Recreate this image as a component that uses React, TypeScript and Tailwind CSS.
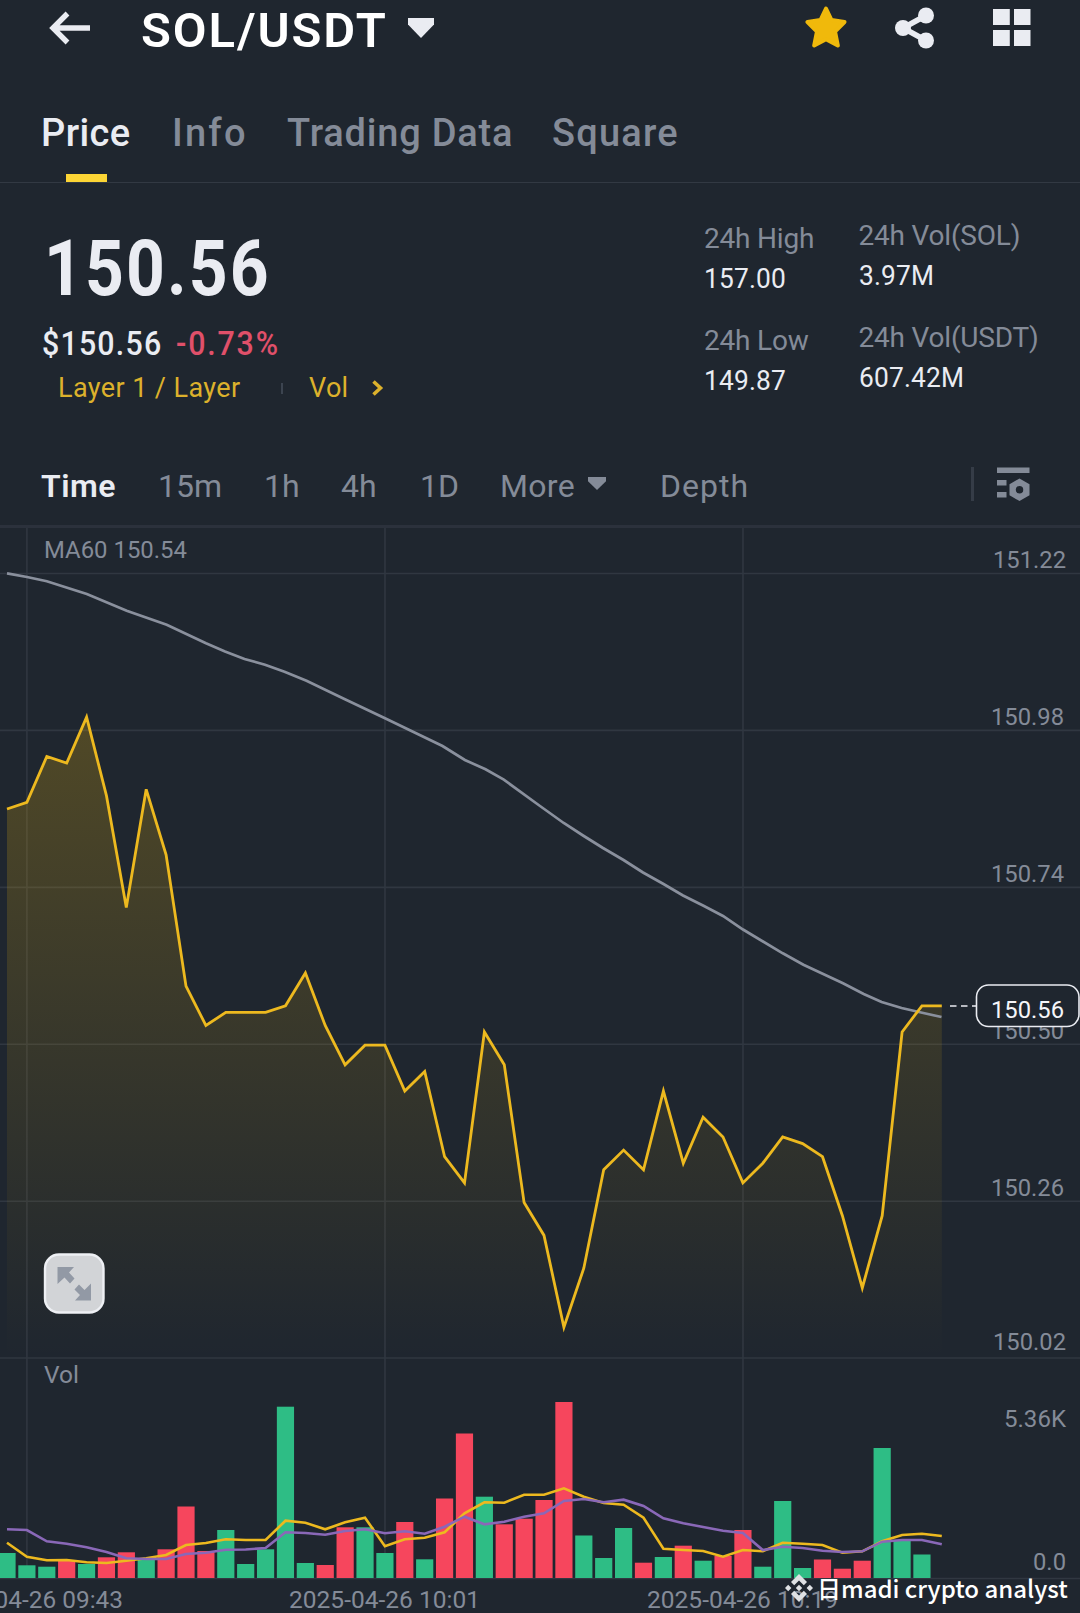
import React from "react";

const STEP = 19.89;
const xAt = (i: number) => 7 + STEP * i;

// Price of each minute, in cents above or below 150.56
const PRICES = [
  30, 31, 38, 37, 44, 32, 15, 33, 23, 3, -3, -1, -1, -1, 0, 5, -3, -9, -6, -6, -13, -10, -23, -27, -4, -9, -30, -35,
  -49, -40, -25, -22, -25, -13, -24, -17, -20, -27, -24, -20, -21, -23, -32, -43, -32, -4, 0, 0,
];
const pricePoints = PRICES.map((p, i) => `${xAt(i).toFixed(1)},${(1005.8 - p * 6.56).toFixed(1)}`).join(" ");

const MA60 =
  "7,573.3 27,577 46.8,581.3 86.8,594 126.7,610.7 166.7,624.7 206,643.3 225,651.5 244.5,659 265,664.7 284.5,671.7 306.5,680.7 344.4,699 385,718.3 413,731.7 442.5,746 464.9,760 485.5,769.3 503.8,779.7 540,806 563.7,823 583,835.5 603,848 623.5,860 643,872.5 663.5,884 683,895.5 703,905.5 723,916 743,929.5 782.8,953.3 803.4,964.7 843,983.3 863.7,994 881.6,1002 901.6,1008 922.2,1012.7 941.5,1017";

const BARS: [number, "g" | "r"][] = [
  [1553, "g"], [1565.3, "g"], [1566.7, "g"], [1560, "r"], [1564, "g"], [1557.3, "r"], [1552.3, "r"], [1559.3, "g"],
  [1549.3, "r"], [1506.5, "r"], [1551, "r"], [1530, "g"], [1564, "g"], [1549.3, "g"], [1406.7, "g"], [1563, "g"],
  [1565, "r"], [1527.3, "r"], [1527.3, "g"], [1553, "g"], [1522, "r"], [1559.3, "g"], [1498.5, "r"], [1433.5, "r"],
  [1496.7, "g"], [1524.3, "r"], [1518.7, "r"], [1500, "r"], [1402, "r"], [1535.5, "g"], [1558, "g"], [1528, "g"],
  [1562.7, "r"], [1557, "g"], [1545.7, "r"], [1560.7, "g"], [1556, "r"], [1530, "r"], [1566.7, "g"], [1501, "g"],
  [1568, "g"], [1559.5, "r"], [1568.7, "r"], [1560.7, "r"], [1448, "g"], [1540.7, "g"], [1554.5, "g"],
];

const VOL_FAST = [
  1542.7, 1556.7, 1560.3, 1560, 1562.3, 1563, 1560.7, 1558.3, 1555, 1545, 1543, 1539.3, 1540, 1540, 1520.7, 1522.7,
  1529.3, 1522.3, 1517.7, 1546.3, 1539.3, 1537.7, 1532.3, 1513.3, 1502.3, 1502.7, 1494.7, 1494.7, 1488.3, 1496.7,
  1503, 1504.7, 1517.7, 1548.7, 1550, 1551, 1556.7, 1550, 1551.3, 1542.7, 1543.7, 1545, 1552.7, 1551.3, 1541.3, 1535,
  1533.7, 1536,
];
const VOL_SLOW = [
  1529.3, 1530, 1541.3, 1543.7, 1547.3, 1552, 1558.3, 1559, 1559, 1554, 1552.7, 1549.7, 1549.5, 1548, 1532.3, 1533,
  1534.7, 1531, 1529.3, 1533.3, 1531.3, 1533.7, 1526.7, 1516.7, 1524.3, 1521.7, 1516.7, 1513.3, 1501, 1499, 1502.3,
  1499.7, 1506, 1518.3, 1523.3, 1527, 1530.7, 1533, 1550, 1546.7, 1548, 1550.7, 1552, 1551.3, 1541.7, 1540, 1540,
  1544.3,
];
const toPoints = (ys: number[]) => ys.map((y, i) => `${xAt(i).toFixed(1)},${y}`).join(" ");

function Caret({ className }: { className: string }) {
  return (
    <svg viewBox="0 0 26 20" preserveAspectRatio="none" className={className} fill="currentColor">
      <path d="M0 0H26V6.5L13 20L0 6.5Z" />
    </svg>
  );
}

function Header() {
  return (
    <header className="flex h-[58px] items-center text-[#eaecf2]">
      <svg viewBox="0 0 42 34" className="mb-[3px] ml-[49px] h-[34px] w-[42px]" fill="none" stroke="currentColor" strokeWidth="5.4">
        <path d="M18.500 2.500L4 17L18.500 31.500M4 17H41" />
      </svg>
      <h1 className="mt-[3px] ml-[50px] w-[267px] text-[49px] leading-[58px] font-semibold tracking-[1.9px] whitespace-nowrap text-white">SOL/USDT</h1>
      <Caret className="mb-[3px] h-[20px] w-[26px]" />
      <svg viewBox="0 0 42 42" className="mb-[4px] ml-[371px] h-[42px] w-[42px]" fill="#f0b90b" stroke="#f0b90b" strokeWidth="4" strokeLinejoin="round">
        <path d="M21 2.500L26.500 14L39.500 16L30 25.500L32.800 39.500L21 33.200L9.200 39.500L12 25.500L2.500 16L15.500 14Z" />
      </svg>
      <svg viewBox="0 0 40 42" className="mb-[3px] ml-[48px] h-[42px] w-[40px]" fill="currentColor" stroke="currentColor">
        <path d="M31 8.500L8 21L31 33.500" fill="none" strokeWidth="5.500" />
        <circle cx="31" cy="8.500" r="8" stroke="none" />
        <circle cx="8" cy="21" r="8" stroke="none" />
        <circle cx="31" cy="33.500" r="8" stroke="none" />
      </svg>
      <svg viewBox="0 0 38 37" className="mb-[3px] ml-[57.500px] h-[37px] w-[38px]" fill="currentColor">
        <path d="M0 0H16.800V16H0ZM21 0H37.500V16H21ZM0 21H16.800V37H0ZM21 21H37.500V37H21Z" />
      </svg>
    </header>
  );
}

function Tabs() {
  return (
    <nav className="flex h-[125px] border-b border-[#323943] pt-[53px] text-[38px] leading-[45px] font-medium whitespace-nowrap text-[#848b98]">
      <div className="ml-[41px] flex w-[131px] flex-col tracking-[0.4px] text-[#eaecf2]">
        <span>Price</span>
        <span className="mt-[18px] ml-[25px] h-[9px] w-[41px] bg-[#fcd535]" />
      </div>
      <span className="w-[115px] tracking-[2.2px]">Info</span>
      <span className="w-[265px] tracking-[0.8px]">Trading Data</span>
      <span className="tracking-[1.2px]">Square</span>
    </nav>
  );
}

function Stat({ label, value }: { label: string; value: string }) {
  return (
    <div className="text-[28px] leading-8 whitespace-nowrap">
      <div className="tracking-[-0.2px] text-[#848b98]">{label}</div>
      <div className="mt-2 origin-left scale-x-[0.94] tracking-[0.2px] text-[#eaecf2]">{value}</div>
    </div>
  );
}

function Summary() {
  return (
    <section className="flex h-[267px] whitespace-nowrap">
      <div className="w-[704px] pt-[46px] pl-[42px]">
        <div className="ml-0.5 w-fit origin-left scale-x-[0.88] text-[77px] leading-[80px] font-bold tracking-[2.4px] text-[#eaecf2]">150.56</div>
        <div className="mt-[15px] flex text-[33px] leading-10 font-medium">
          <span className="w-[134px] origin-left scale-x-[0.92] tracking-[1.3px] text-[#eaecf2]">$150.56</span>
          <span className="origin-left scale-x-[0.92] tracking-[2px] text-[#e0506a]">-0.73%</span>
        </div>
        <div className="mt-[9px] flex items-center pl-4 text-[27px] leading-[30px] text-[#dcb12c]">
          <span className="w-[223px] tracking-[0.4px]">Layer 1 / Layer</span>
          <span className="h-[11px] w-[2px] bg-[#3c4450]" />
          <span className="ml-[26px] w-[63px] tracking-[0.3px]">Vol</span>
          <svg viewBox="0 0 12 16" className="mb-[1px] h-4 w-3" fill="none" stroke="currentColor" strokeWidth="3.600">
            <path d="M1.500 1.500L8.500 8L1.500 14.500" />
          </svg>
        </div>
      </div>
      <div className="flex w-[154.500px] flex-col gap-[30px] pt-[40px]">
        <Stat label="24h High" value="157.00" />
        <Stat label="24h Low" value="149.87" />
      </div>
      <div className="flex flex-col gap-[30px] pt-[37px]">
        <Stat label="24h Vol(SOL)" value="3.97M" />
        <Stat label="24h Vol(USDT)" value="607.42M" />
      </div>
    </section>
  );
}

function Intervals() {
  return (
    <div className="flex h-[78px] items-center border-b-[3px] border-[#2b313c] pb-1 text-[32px] leading-10 whitespace-nowrap text-[#848b98]">
      <span className="ml-[41px] w-[117px] font-semibold tracking-[0.5px] text-[#eaecf2]">Time</span>
      <span className="w-[106px]">15m</span>
      <span className="w-[77px]">1h</span>
      <span className="w-[79px]">4h</span>
      <span className="w-[80px]">1D</span>
      <span className="w-[88px] tracking-[0.3px]">More</span>
      <Caret className="mb-1 h-[13px] w-[18px]" />
      <span className="ml-[54px] w-[311px] tracking-[1px]">Depth</span>
      <span className="mb-1 h-[34px] w-[3px] bg-[#353c47]" />
      <svg viewBox="0 0 33 34" className="mb-1 ml-[23px] h-[34px] w-[33px]" fill="currentColor">
        <path d="M0 .5H32.500V6H0ZM0 13H9.500V18.500H0ZM0 25H9.500V30.500H0Z" />
        <path fillRule="evenodd" d="M22.500 11.500L32.500 17.200V28.300L22.500 34L12.500 28.300V17.200ZM22.500 19A3.700 3.700 0 1 0 22.500 26.500A3.700 3.700 0 1 0 22.500 19Z" />
      </svg>
    </div>
  );
}

function Label({ x, y, w, children, fill = "#848b98" }: { x: number; y: number; w: number; children: string; fill?: string }) {
  return (
    <text x={x} y={y} textLength={w} lengthAdjust="spacingAndGlyphs" fontSize="24.500" fill={fill}>
      {children}
    </text>
  );
}

function Chart() {
  return (
    <svg viewBox="0 528 1080 1085" className="block h-[1085px] w-[1080px]">
      <defs>
        <linearGradient id="area" gradientUnits="userSpaceOnUse" x1="0" y1="573" x2="0" y2="1358">
          <stop offset="0" stopColor="#f0b90b" stopOpacity="0.290" />
          <stop offset="1" stopColor="#f0b90b" stopOpacity="0" />
        </linearGradient>
      </defs>
      <g stroke="#303741" strokeWidth="1.600">
        {[573.5, 730.4, 887.4, 1044.2, 1201.2, 1358, 1578.5].map((y) => (
          <path key={y} d={`M0 ${y}H1080`} />
        ))}
        {[26.9, 385, 743].map((x) => (
          <path key={x} d={`M${x} 528V1578`} />
        ))}
      </g>
      <polygon points={`7,1358 ${pricePoints} ${xAt(47)},1358`} fill="url(#area)" />
      <polyline points={MA60} fill="none" stroke="#8a909d" strokeWidth="2.700" />
      <polyline points={pricePoints} fill="none" stroke="#edb91f" strokeWidth="2.800" />

      <Label x={44} y={558} w={143}>MA60 150.54</Label>
      <Label x={993} y={568} w={73}>151.22</Label>
      <Label x={991} y={725} w={73}>150.98</Label>
      <Label x={991} y={882} w={73}>150.74</Label>
      <Label x={991} y={1039} w={73}>150.50</Label>
      <Label x={991} y={1196} w={73}>150.26</Label>
      <Label x={993} y={1350} w={73}>150.02</Label>
      <Label x={44} y={1382.500} w={35}>Vol</Label>
      <Label x={1004} y={1427} w={62}>5.36K</Label>
      <Label x={1033} y={1569.500} w={33}>0.0</Label>

      <path d="M950 1006H976" stroke="#eaecf2" strokeWidth="1.600" strokeDasharray="6.500 4.500" />
      <rect x="976.500" y="985" width="102.500" height="41.500" rx="12" fill="#1f262f" stroke="#eaecf2" strokeWidth="1.600" />
      <Label x={991} y={1018} w={73} fill="#f5f6fa">150.56</Label>

      <g>
        <rect x="45" y="1254.500" width="58.500" height="58" rx="14" fill="#d2d4d7" stroke="#eef0f4" strokeWidth="2.400" />
        <path fill="#9299a5" d="M57.500 1267H74L69 1272.500L74.500 1278.500L70 1283.500L64.500 1277.500L57.500 1284ZM91 1300.500H75L80 1295L74.500 1289.500L79 1284.500L84.500 1290L91 1283.500Z" />
      </g>

      {BARS.map(([top, kind], i) => (
        <rect key={i} x={xAt(i) - 8.6} y={top} width="17.200" height={1578 - top} fill={kind === "g" ? "#2ebd85" : "#f6465d"} />
      ))}
      <polyline points={toPoints(VOL_FAST)} fill="none" stroke="#edb91f" strokeWidth="2.600" />
      <polyline points={toPoints(VOL_SLOW)} fill="none" stroke="#8a68b8" strokeWidth="2.600" />

      <Label x={-67} y={1607.5} w={190}>2025-04-26 09:43</Label>
      <Label x={289} y={1607.5} w={191}>2025-04-26 10:01</Label>
      <Label x={647} y={1607.5} w={191}>2025-04-26 10:19</Label>
    </svg>
  );
}

function Watermark() {
  return (
    <div className="absolute right-[13px] bottom-[7px] flex h-[36px] w-[282px] items-center font-['Noto_Sans_CJK_SC',sans-serif] text-[24px] leading-[36px] font-medium whitespace-nowrap text-white">
      <svg viewBox="0 0 28 28" className="mb-[1px] mr-[4px] h-[28px] w-[28px] shrink-0" fill="#dfe1e4">
        <path d="M14 0L22 8L18.800 11.200L14 6.400L9.200 11.200L6 8ZM14 28L22 20L18.800 16.800L14 21.600L9.200 16.800L6 20ZM14 10.800L17.200 14L14 17.200L10.800 14ZM3.200 10.800L6.400 14L3.200 17.200L0 14ZM24.800 10.800L28 14L24.800 17.200L21.600 14Z" />
      </svg>
      <span className="grow">日madi crypto analyst</span>
    </div>
  );
}

export default function App() {
  return (
    <main className="relative h-[1613px] w-[1080px] overflow-hidden bg-[#1f262f] font-[Roboto,sans-serif]">
      <Header />
      <Tabs />
      <Summary />
      <Intervals />
      <Chart />
      <Watermark />
    </main>
  );
}
